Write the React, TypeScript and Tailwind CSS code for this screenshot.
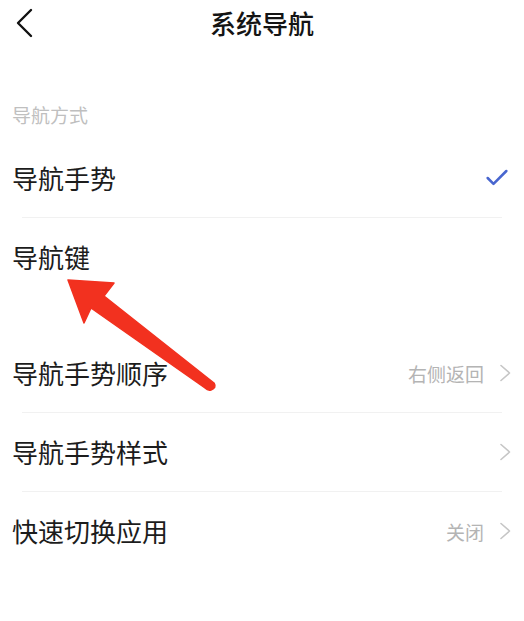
import { Check } from "lucide-react";

type Row = {
  label: string;
  value?: string;
  checked?: boolean;
  arrow?: boolean;
};

function Chevron() {
  return (
    <svg width="12" height="18" viewBox="0 0 12 18" fill="none">
      <path d="M2 1.5 L10.5 9 L2 16.5" stroke="#c6c6c6" strokeWidth="1.6" strokeLinecap="round" strokeLinejoin="round" />
    </svg>
  );
}

function Item({ label, value, checked, arrow }: Row) {
  return (
    <div className="h-[78px] flex items-center justify-between pl-3 pr-[13px]">
      <span className="text-[26px] leading-none text-[#1c1c1c]">{label}</span>
      <div className="flex items-center gap-[15px]">
        {value && <span className="text-[19px] leading-none text-[#b4b4b4]">{value}</span>}
        {checked && <Check className="h-[28px] w-[28px] text-[#4866cf]" strokeWidth={2.2} />}
        {arrow && <Chevron />}
      </div>
    </div>
  );
}

function Divider() {
  return <div className="h-px mx-[22px] bg-[#f1f1f1]" />;
}

export default function App() {
  return (
    <div className="relative w-[524px] h-[621px] overflow-hidden bg-white font-['Noto_Sans_CJK_SC','Noto_Sans',sans-serif]">
      {/* Header */}
      <div className="h-[46px] grid grid-cols-[60px_1fr_60px] items-center">
        <svg className="ml-[15px]" width="20" height="30" viewBox="0 0 20 30" fill="none">
          <path d="M16 2 L3 15 L16 28" stroke="#111" strokeWidth="2.4" strokeLinecap="round" strokeLinejoin="round" />
        </svg>
        <h1 className="text-center text-[26px] font-medium leading-none text-[#141414]">系统导航</h1>
        <div />
      </div>

      {/* Section label */}
      <div className="mt-[57px] pl-3 text-[19px] leading-6 text-[#bfbfbf]">导航方式</div>

      <div className="mt-[12px]">
        <Item label="导航手势" checked />
        <Divider />
        <Item label="导航键" />
      </div>

      <div className="mt-[38px]">
        <Item label="导航手势顺序" value="右侧返回" arrow />
        <Divider />
        <Item label="导航手势样式" arrow />
        <Divider />
        <Item label="快速切换应用" value="关闭" arrow />
      </div>

      {/* Annotation arrow */}
      <svg className="absolute left-0 top-0 pointer-events-none" width="524" height="621" viewBox="0 0 524 621">
        <path
          d="M68 280 L114 283 L104 296 L214 383 Q217 388 211 390 Q208 391 205 388 L91 308 L84 323 Z"
          fill="#f2311f"
          stroke="#f2311f"
          strokeWidth="1.5"
          strokeLinejoin="round"
        />
      </svg>
    </div>
  );
}
